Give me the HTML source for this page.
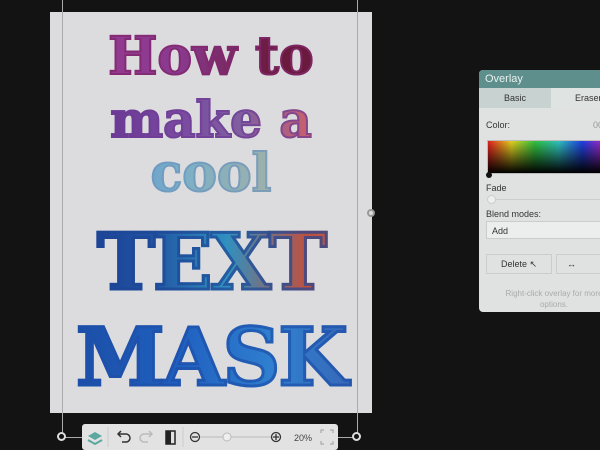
<!DOCTYPE html>
<html><head><meta charset="utf-8"><style>
*{margin:0;padding:0;box-sizing:border-box}
body{width:600px;height:448px;background:#131314;overflow:hidden;position:relative;font-family:"Liberation Sans",sans-serif}
.page{position:absolute;left:50px;top:12px;width:322px;height:401px;background:#dcdcde}
.ln{position:absolute;left:0;width:322px;text-align:center;font-family:"DejaVu Serif",serif;font-weight:bold;white-space:nowrap;-webkit-background-clip:text;background-clip:text;color:transparent;-webkit-text-fill-color:transparent}
.v{position:absolute;background:#aaa;width:1px}
.h{position:absolute;background:#aaa;height:1px}
.hd{position:absolute;width:9px;height:9px;border:2px solid #ddd;border-radius:50%;background:#131314}
.panel{position:absolute;left:479px;top:70px;width:125px;height:242px;background:#e0e2e1;border-radius:4px;overflow:hidden;font-size:9px;color:#333}
.tb{position:absolute;left:82px;top:424px;width:256px;height:26px;background:#e2e2e2;border-radius:3px}
</style></head><body>
<div class="page">
<div class="ln" style="top:14px;font-size:52px;-webkit-text-stroke:2px rgba(130,40,110,.8);background-image:linear-gradient(90deg,#9a3a8e,#8a3a90 40%,#6a1a3a 70%,#6a1a40)">How to</div>
<div class="ln" style="top:78px;font-size:50px;-webkit-text-stroke:2px rgba(110,60,150,.7);background-image:linear-gradient(90deg,#5a2a8a,#7a4aa0 40%,#8060a0 60%,#d86060 85%)">make a</div>
<div class="ln" style="top:131px;font-size:52px;-webkit-text-stroke:2px rgba(110,150,190,.7);background-image:linear-gradient(90deg,#4a7ad0,#7ab0c8 40%,#a0b0a8 70%,#d8c050)">cool</div>
<div class="ln" style="top:205px;font-size:78px;letter-spacing:-2px;-webkit-text-stroke:3px rgba(30,70,150,.7);background-image:linear-gradient(90deg,#1a3a90,#2050a0 30%,#3090c0 55%,#c05040 80%,#b06050)">TEXT</div>
<div class="ln" style="top:298px;font-size:80px;letter-spacing:-2px;-webkit-text-stroke:3px rgba(30,80,170,.7);background-image:linear-gradient(90deg,#1a4aa0,#2060c0 40%,#3080d0 70%,#3a60b0)">MASK</div>
</div>
<div class="v" style="left:62px;top:0;height:437px"></div>
<div class="v" style="left:357px;top:0;height:437px"></div>
<div class="h" style="left:62px;top:437px;width:296px"></div>
<div class="hd" style="left:57px;top:432px"></div>
<div class="hd" style="left:352px;top:432px"></div>
<div class="hd" style="left:367px;top:209px;background:#ddd;border-color:#999;width:8px;height:8px"></div>
<div class="tb">
 <svg width="256" height="26" style="position:absolute;left:0;top:0">
  <path d="M6 12 l7-4 7 4-7 4z" fill="#5aa8a0"/><path d="M6 16 l7 4 7-4" fill="none" stroke="#5aa8a0" stroke-width="2"/>
  <line x1="26" y1="3" x2="26" y2="23" stroke="#ccc"/>
  <path d="M36 10 h8 a4 4 0 0 1 0 8 h-4 M39 7 l-3 3 3 3" fill="none" stroke="#333" stroke-width="1.5"/>
  <path d="M70 10 h-8 a4 4 0 0 0 0 8 h4 M67 7 l3 3-3 3" fill="none" stroke="#bbb" stroke-width="1.5"/>
  <rect x="84" y="7" width="9" height="13" fill="none" stroke="#222" stroke-width="1.5"/><rect x="84" y="7" width="5" height="13" fill="#222"/>
  <line x1="101" y1="3" x2="101" y2="23" stroke="#ccc"/>
  <circle cx="113" cy="13" r="4.5" fill="none" stroke="#333" stroke-width="1.3"/><line x1="110" y1="13" x2="116" y2="13" stroke="#333" stroke-width="1.3"/>
  <line x1="118" y1="13" x2="189" y2="13" stroke="#bbb"/>
  <circle cx="145" cy="13" r="4" fill="#eee" stroke="#bbb"/>
  <circle cx="194" cy="13" r="4.5" fill="none" stroke="#333" stroke-width="1.3"/><path d="M191 13h6M194 10v6" stroke="#333" stroke-width="1.3"/>
  <text x="212" y="17" font-size="9" fill="#444" font-family="Liberation Sans">20%</text>
  <path d="M239 9v-3h3M248 6h3v3M251 17v3h-3M242 20h-3v-3" fill="none" stroke="#aaa" stroke-width="1.2"/>
 </svg>
</div>
<div class="panel">
 <div style="height:18px;background:#5e8f8c;color:#e8f0ef;font-size:11px;padding:3px 6px">Overlay</div>
 <div style="height:20px;display:flex"><div style="width:72px;background:#c8d2d0;text-align:center;line-height:20px">Basic</div><div style="flex:1;background:#dfe3e2;line-height:20px;padding-left:24px">Eraser</div></div>
 <div style="position:absolute;left:7px;top:50px">Color:</div><div style="position:absolute;left:114px;top:50px;color:#999">000</div>
 <div style="position:absolute;left:8px;top:70px;width:120px;height:34px;border:1px solid #bbb;background:linear-gradient(#0000,#000),linear-gradient(90deg,#e02020,#e0d020,#30c040,#30c0c0,#2040e0,#c020c0)"></div>
 <div style="position:absolute;left:7px;top:102px;width:6px;height:6px;border-radius:50%;background:#111"></div>
 <div style="position:absolute;left:7px;top:113px">Fade</div>
 <div style="position:absolute;left:14px;top:129px;width:120px;height:1px;background:#ccc"></div>
 <div style="position:absolute;left:8px;top:125px;width:9px;height:9px;border-radius:50%;border:1px solid #ccc;background:#eee"></div>
 <div style="position:absolute;left:7px;top:139px">Blend modes:</div>
 <div style="position:absolute;left:7px;top:151px;width:120px;height:18px;border:1px solid #ccc;background:#eceeed;padding:4px 5px">Add</div>
 <div style="position:absolute;left:7px;top:184px;width:66px;height:20px;border:1px solid #ccc;text-align:center;line-height:18px">Delete ↖</div>
 <div style="position:absolute;left:77px;top:184px;width:50px;height:20px;border:1px solid #ccc;padding-left:10px;line-height:18px;font-weight:bold">↔</div>
 <div style="position:absolute;left:0;top:218px;width:150px;text-align:center;color:#aaa;font-size:8px;line-height:11px">Right-click overlay for more<br>options.</div>
</div>
</body></html>
